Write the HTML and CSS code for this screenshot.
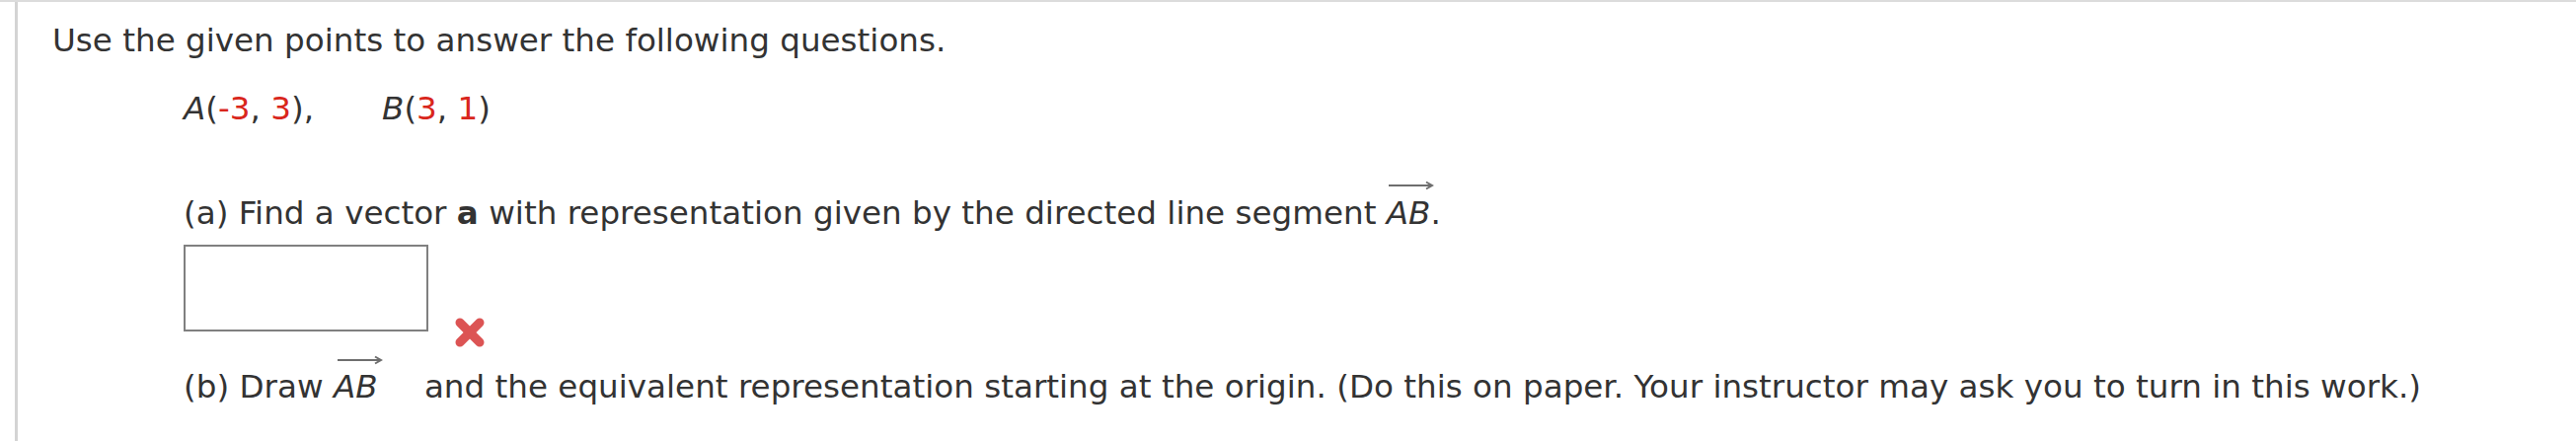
FILE: index.html
```html
<!DOCTYPE html>
<html>
<head>
<meta charset="utf-8">
<link rel="stylesheet" href="styles.css">
</head>
<body>
<div class="frame">
  <div class="panel">
    <p class="line intro">Use the given points to answer the following questions.</p>
    <div class="indent">
      <p class="line points"><span class="var">A</span>(<span class="num">-3</span>, <span class="num">3</span>),<span class="pt-b"><span class="var">B</span>(<span class="num">3</span>, <span class="num">1</span>)</span></p>
    </div>
    <div class="indent part-a">
      <p class="line">(a) Find a vector <b>a</b> with representation given by the directed line segment <span class="vec"><span class="var">AB</span><svg class="arrow" viewBox="0 0 46 10" width="46" height="10"><line x1="0" y1="5" x2="43" y2="5"/><polyline points="38,1.5 44,5 38,8.5"/></svg></span>.</p>
      <div class="answer-row">
        <div class="answer-box"></div>
        <svg class="wrong" viewBox="0 0 34 34" width="34" height="34"><line x1="7" y1="7" x2="27" y2="27"/><line x1="27" y1="7" x2="7" y2="27"/></svg>
      </div>
    </div>
    <div class="indent part-b">
      <p class="line">(b) Draw <span class="vec vec-b"><span class="var">AB</span><svg class="arrow" viewBox="0 0 46 10" width="46" height="10"><line x1="0" y1="5" x2="43" y2="5"/><polyline points="38,1.5 44,5 38,8.5"/></svg></span> and the equivalent representation starting at the origin. (Do this on paper. Your instructor may ask you to turn in this work.)</p>
    </div>
  </div>
</div>
</body>
</html>
```

FILE: styles.css
```css
html, body {
  margin: 0;
  padding: 0;
  background: #ffffff;
}

body {
  font-family: "DejaVu Sans", Verdana, sans-serif;
  font-size: 32.6px;
  color: #333333;
}

.frame {
  border-top: 2px solid #dcdcdc;
  height: 445px;
}

.panel {
  margin-left: 15px;
  border-left: 3px solid #d4d4d4;
  height: 445px;
  padding: 19px 0 0 35px;
  box-sizing: border-box;
}

.line {
  margin: 0;
  line-height: 40px;
  white-space: nowrap;
}

.indent {
  padding-left: 133px;
}

.points {
  margin-top: 29px;
}

.var {
  font-style: italic;
}

.num {
  color: #d9261c;
}

.pt-b {
  margin-left: 69px;
}

.part-a {
  margin-top: 66px;
}

.vec {
  position: relative;
  display: inline-block;
}

.vec-b {
  margin-right: 37px;
}

.arrow {
  position: absolute;
  left: 2px;
  top: -13px;
  fill: none;
  stroke: #6e6e6e;
  stroke-width: 2;
}

.vec-b .arrow {
  left: 4px;
  top: -12px;
}

.answer-row {
  display: flex;
  align-items: flex-start;
  margin-top: 12px;
}

.answer-box {
  width: 244px;
  height: 84px;
  border: 2px solid #808080;
  background: #ffffff;
}

.wrong {
  margin-top: 72px;
  margin-left: 25px;
  stroke: #dc5454;
  stroke-width: 9;
  stroke-linecap: round;
}

.part-b {
  margin-top: 18px;
}
```
